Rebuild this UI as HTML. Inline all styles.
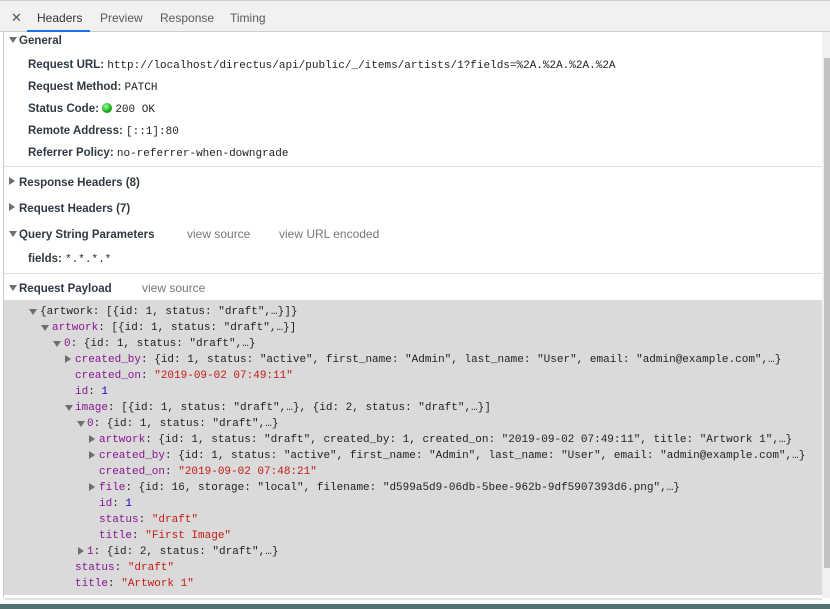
<!DOCTYPE html>
<html><head><meta charset="utf-8"><style>
body{margin:0;width:830px;height:609px;overflow:hidden;background:#fff;font-family:"Liberation Sans",sans-serif;font-size:12px;color:#303942;position:relative}
.tabs{position:absolute;left:0;top:0;width:830px;height:32px;background:#f1f1f1;border-top:1px solid #ccc;border-bottom:1px solid #ccc;box-sizing:border-box}
.tab{position:absolute;top:10px;color:#5a5a5a;font-size:12px}
.abs{position:absolute;white-space:nowrap}
.b{font-weight:bold;color:#303942;font-size:11.5px;margin-top:2px}
.m{font-family:"Liberation Mono",monospace;font-size:11px;color:#222;font-weight:normal}
.lnk{color:#777}
.tri{position:absolute;width:0;height:0}
.down{border-left:4px solid transparent;border-right:4px solid transparent;border-top:6px solid #6e6e6e}
.right{border-top:4px solid transparent;border-bottom:4px solid transparent;border-left:6px solid #6e6e6e}
.k{color:#881391}.s{color:#c41a16}.n{color:#1c00cf}
.hr{position:absolute;left:4px;width:818px;height:1px;background:#e0e0e0}
</style></head><body>
<div class="tabs">
<div class="abs" style="left:11px;top:9px;color:#555;font-size:13px">✕</div>
<div class="tab" style="left:37px;color:#333">Headers</div>
<div style="position:absolute;left:27px;top:29px;width:63px;height:2px;background:#1a73e8"></div>
<div class="tab" style="left:100px">Preview</div>
<div class="tab" style="left:160px">Response</div>
<div class="tab" style="left:230px">Timing</div>
</div>
<div style="position:absolute;left:3px;top:32px;width:1px;height:566px;background:#ccc"></div>
<div style="position:absolute;left:822px;top:32px;width:8px;height:566px;background:#f1f1f1"></div>
<div style="position:absolute;left:824px;top:58px;width:6px;height:510px;background:#c1c1c1"></div>

<div class="tri down" style="left:9px;top:37px"></div><div class="abs b" style="left:19px;top:33px">General</div>
<div class="abs b" style="left:28px;top:57px">Request URL: <span class="m">http://localhost/directus/api/public/_/items/artists/1?fields=%2A.%2A.%2A.%2A</span></div>
<div class="abs b" style="left:28px;top:79px">Request Method: <span class="m">PATCH</span></div>
<div class="abs b" style="left:28px;top:101px">Status Code: <span style="display:inline-block;width:10px;height:10px;border-radius:50%;background:radial-gradient(circle at 40% 35%,#9f9,#1a1 60%,#070);vertical-align:-1px"></span> <span class="m">200 OK</span></div>
<div class="abs b" style="left:28px;top:123px">Remote Address: <span class="m">[::1]:80</span></div>
<div class="abs b" style="left:28px;top:145px">Referrer Policy: <span class="m">no-referrer-when-downgrade</span></div>
<div class="hr" style="top:166px"></div>
<div class="tri right" style="left:9px;top:177px"></div><div class="abs b" style="left:19px;top:175px">Response Headers (8)</div>
<div class="tri right" style="left:9px;top:203px"></div><div class="abs b" style="left:19px;top:201px">Request Headers (7)</div>
<div class="tri down" style="left:9px;top:231px"></div><div class="abs b" style="left:19px;top:227px">Query String Parameters</div>
<div class="abs lnk" style="left:187px;top:227px">view source</div>
<div class="abs lnk" style="left:279px;top:227px">view URL encoded</div>
<div class="abs b" style="left:28px;top:251px">fields: <span class="m">*.*.*.*</span></div>
<div class="hr" style="top:273px"></div>
<div class="tri down" style="left:9px;top:285px"></div><div class="abs b" style="left:19px;top:281px">Request Payload</div>
<div class="abs lnk" style="left:142px;top:281px">view source</div>

<div style="position:absolute;left:4px;top:300px;width:818px;height:295px;background:#dadada"></div>
<div style="position:absolute;left:4px;top:598px;width:818px;height:2px;background:#e2e2e2"></div>
<div style="position:absolute;left:0;top:604px;width:830px;height:5px;background:#557272"></div>

<div class="tri down" style="left:29px;top:309px"></div><div class="abs m" style="left:40px;top:306px">{artwork: [{id: 1, status: "draft",…}]}</div>
<div class="tri down" style="left:41px;top:325px"></div><div class="abs m" style="left:52px;top:322px"><span class="k">artwork</span>: [{id: 1, status: "draft",…}]</div>
<div class="tri down" style="left:53px;top:341px"></div><div class="abs m" style="left:64px;top:338px"><span class="k">0</span>: {id: 1, status: "draft",…}</div>
<div class="tri right" style="left:65px;top:355px"></div><div class="abs m" style="left:75px;top:354px"><span class="k">created_by</span>: {id: 1, status: "active", first_name: "Admin", last_name: "User", email: "admin@example.com",…}</div>
<div class="abs m" style="left:75px;top:370px"><span class="k">created_on</span>: <span class="s">"2019-09-02 07:49:11"</span></div>
<div class="abs m" style="left:75px;top:386px"><span class="k">id</span>: <span class="n">1</span></div>
<div class="tri down" style="left:65px;top:405px"></div><div class="abs m" style="left:75px;top:402px"><span class="k">image</span>: [{id: 1, status: "draft",…}, {id: 2, status: "draft",…}]</div>
<div class="tri down" style="left:77px;top:421px"></div><div class="abs m" style="left:87px;top:418px"><span class="k">0</span>: {id: 1, status: "draft",…}</div>
<div class="tri right" style="left:89px;top:435px"></div><div class="abs m" style="left:99px;top:434px"><span class="k">artwork</span>: {id: 1, status: "draft", created_by: 1, created_on: "2019-09-02 07:49:11", title: "Artwork 1",…}</div>
<div class="tri right" style="left:89px;top:451px"></div><div class="abs m" style="left:99px;top:450px"><span class="k">created_by</span>: {id: 1, status: "active", first_name: "Admin", last_name: "User", email: "admin@example.com",…}</div>
<div class="abs m" style="left:99px;top:466px"><span class="k">created_on</span>: <span class="s">"2019-09-02 07:48:21"</span></div>
<div class="tri right" style="left:89px;top:483px"></div><div class="abs m" style="left:99px;top:482px"><span class="k">file</span>: {id: 16, storage: "local", filename: "d599a5d9-06db-5bee-962b-9df5907393d6.png",…}</div>
<div class="abs m" style="left:99px;top:498px"><span class="k">id</span>: <span class="n">1</span></div>
<div class="abs m" style="left:99px;top:514px"><span class="k">status</span>: <span class="s">"draft"</span></div>
<div class="abs m" style="left:99px;top:530px"><span class="k">title</span>: <span class="s">"First Image"</span></div>
<div class="tri right" style="left:78px;top:547px"></div><div class="abs m" style="left:87px;top:546px"><span class="k">1</span>: {id: 2, status: "draft",…}</div>
<div class="abs m" style="left:75px;top:562px"><span class="k">status</span>: <span class="s">"draft"</span></div>
<div class="abs m" style="left:75px;top:578px"><span class="k">title</span>: <span class="s">"Artwork 1"</span></div>
</body></html>
